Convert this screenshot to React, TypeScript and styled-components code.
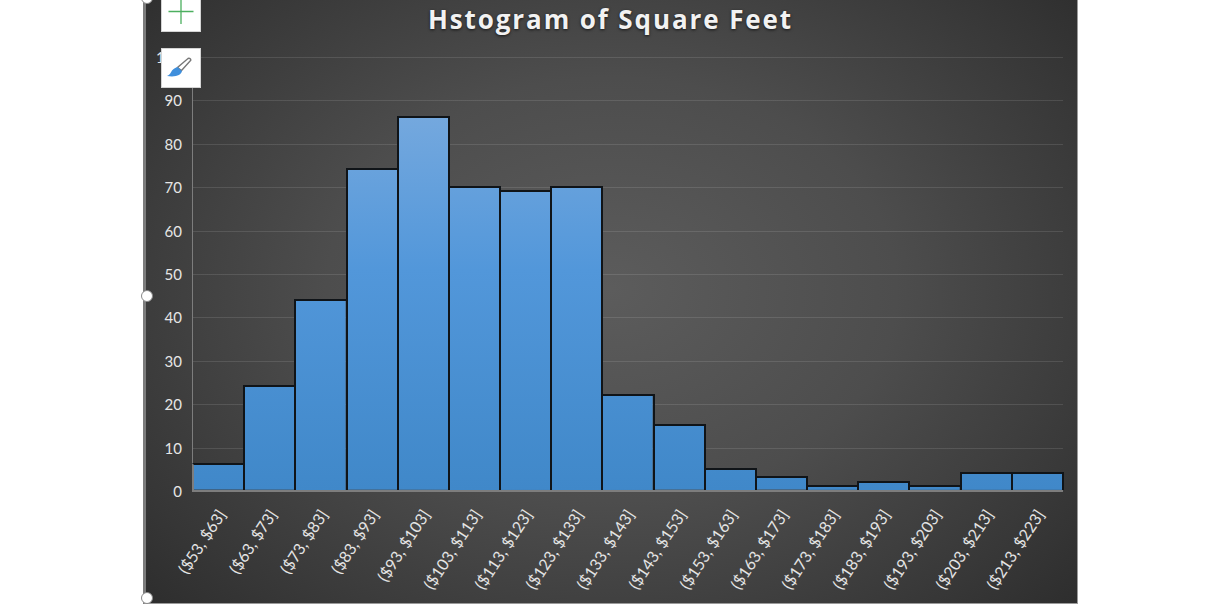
import styled, { createGlobalStyle } from "styled-components";

const GlobalStyle = createGlobalStyle`
  html, body {
    margin: 0;
    padding: 0;
    background: #ffffff;
  }
`;

const Page = styled.div`
  width: 1220px;
  height: 608px;
  overflow: hidden;
  padding-left: 143px;
  box-sizing: border-box;
`;

const ChartArea = styled.div`
  position: relative;
  width: 935px;
  height: 604px;
  box-sizing: border-box;
  padding-right: 14px;
  background: radial-gradient(ellipse 68% 78% at 50% 48%, #5c5c5c 0%, #4d4d4d 45%, #363636 85%, #2d2d2d 100%);
  border-left: 3px solid #7c7c7c;
  border-right: 1px solid #9a9a9a;
  border-bottom: 1px solid #9a9a9a;
`;

const Title = styled.h1`
  margin: 0;
  height: 57px;
  padding: 2px 0 0 12px;
  box-sizing: border-box;
  font: 700 26px/34px "Open Sans", sans-serif;
  letter-spacing: 1.9px;
  text-align: center;
  color: #f2f2f2;
  text-shadow: 0 1px 3px rgba(0, 0, 0, 0.7);
`;

const PlotRow = styled.div`
  display: flex;
  justify-content: flex-end;
`;

const YAxis = styled.div`
  display: flex;
  flex-direction: column;
  justify-content: space-between;
  align-items: flex-end;
  height: 434px;
  padding-right: 11px;
`;

const YLabel = styled.span`
  display: flex;
  align-items: center;
  height: 0;
  font: 400 15px "Lato", sans-serif;
  color: #e6e6e6;
`;

const Plot = styled.div`
  display: flex;
  align-items: flex-end;
  width: 870px;
  height: 435px;
  box-sizing: border-box;
  box-shadow: -1px 0 0 #7d7d7d;
  border-bottom: 2px solid #7d7d7d;
  background-image: repeating-linear-gradient(
    to bottom,
    rgba(255, 255, 255, 0.11) 0,
    rgba(255, 255, 255, 0.11) 1px,
    transparent 1px,
    transparent 43.4px
  );
`;

const Bar = styled.div<{ $value: number }>`
  flex: none;
  width: calc(100% / 17 + 2px);
  margin-right: -2px;
  height: ${(p) => p.$value * 4.34 + 0.5}px;
  box-sizing: border-box;
  border: 2px solid #101418;
  border-bottom: none;
  background: linear-gradient(to top, #4088c9 0, #5297da 220px, #74a8de 373px) bottom / 100% 373px no-repeat;
  &:first-child {
    margin-left: -1px;
    border-left-color: #7d7d7d;
  }
`;

const XAxis = styled.div`
  display: flex;
  width: 870px;
  margin-left: auto;
`;

const XCell = styled.div`
  flex: 1 1 0;
  min-width: 0;
  height: 112px;
  display: flex;
  justify-content: flex-end;
  padding-top: 11px;
  box-sizing: border-box;
`;

const XLabel = styled.span`
  flex: none;
  height: 16px;
  font: 400 16px/16px "Lato", sans-serif;
  color: #e4e4e4;
  white-space: nowrap;
  transform-origin: right center;
  transform: translateX(-23px) rotate(-57deg);
`;

const FloatButton = styled.button<{ $top: number }>`
  position: absolute;
  left: 15px;
  top: ${(p) => p.$top}px;
  width: 40px;
  height: 40px;
  padding: 0;
  display: flex;
  align-items: center;
  justify-content: center;
  background: #ffffff;
  border: 1px solid #d4d4d4;
`;

const Handle = styled.span<{ $top: number }>`
  position: absolute;
  left: -5px;
  top: ${(p) => p.$top}px;
  width: 12px;
  height: 12px;
  box-sizing: border-box;
  border-radius: 50%;
  background: #ffffff;
  border: 1px solid #8a8a8a;
`;

const values = [6, 24, 44, 74, 86, 70, 69, 70, 22, 15, 5, 3, 1, 2, 1, 4, 4];
const ticks = [100, 90, 80, 70, 60, 50, 40, 30, 20, 10, 0];

const binLabel = (i: number) => `($${53 + i * 10}, $${63 + i * 10}]`;

export default function App() {
  return (
    <>
      <GlobalStyle />
      <Page>
        <ChartArea>
          <Title>Hstogram of Square Feet</Title>
          <PlotRow>
            <YAxis>
              {ticks.map((t) => (
                <YLabel key={t}>{t}</YLabel>
              ))}
            </YAxis>
            <Plot>
              {values.map((v, i) => (
                <Bar key={i} $value={v} />
              ))}
            </Plot>
          </PlotRow>
          <XAxis>
            {values.map((_, i) => (
              <XCell key={i}>
                <XLabel>{binLabel(i)}</XLabel>
              </XCell>
            ))}
          </XAxis>

          <FloatButton $top={-8} aria-label="Chart elements">
            <svg width="38" height="38" viewBox="0 0 38 38">
              <path d="M19 6v25M6.500 18.500h25" stroke="#4caf5f" strokeWidth="1.3" fill="none" />
            </svg>
          </FloatButton>
          <FloatButton $top={48} aria-label="Chart styles">
            <svg width="38" height="38" viewBox="1 1 38 38">
              <path d="M27 10.500 C28.500 9.800 30 10.800 29.800 12.200 L20.500 22.500 L16.500 19.500 Z" fill="#ffffff" stroke="#777777" strokeWidth="1.4" />
              <path d="M16.500 19 L21 23 C20 27 15 29.500 6 28 C9 27 9.500 25 11 22.500 C12.500 20.500 15 19.500 16.500 19 Z" fill="#3f8fdc" />
            </svg>
          </FloatButton>

          <Handle $top={-8} />
          <Handle $top={290} />
          <Handle $top={592} />
        </ChartArea>
      </Page>
    </>
  );
}
